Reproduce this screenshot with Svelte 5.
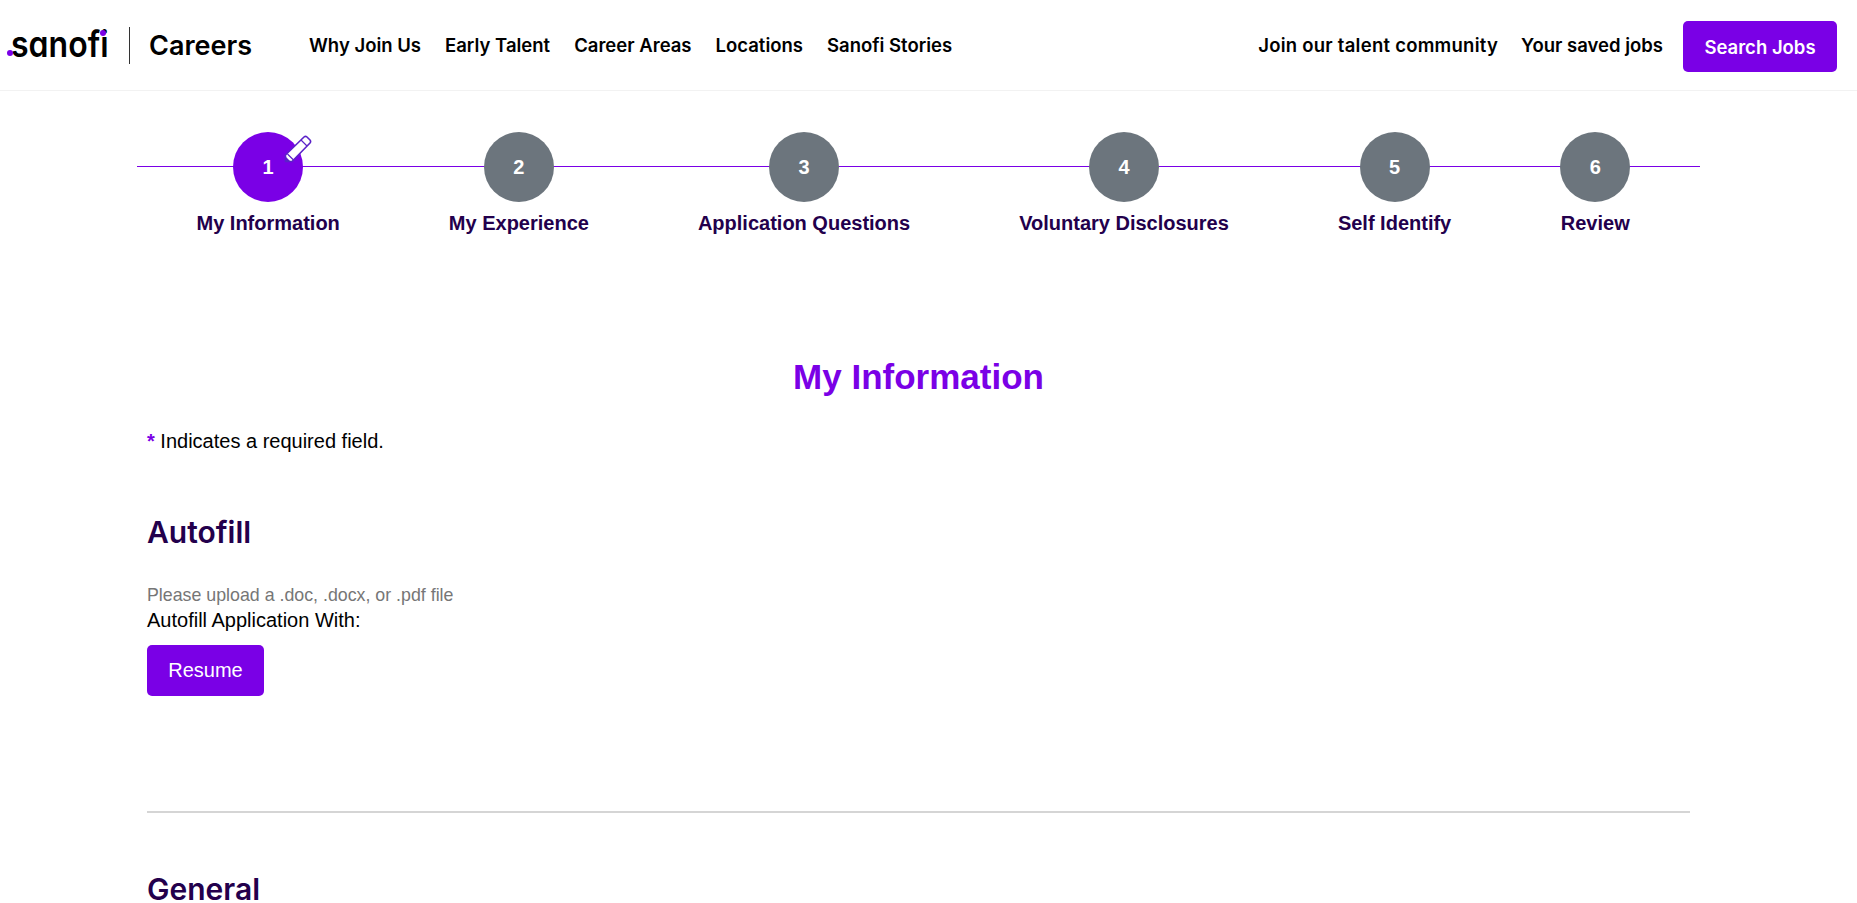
<script>
  const nav = ['Why Join Us', 'Early Talent', 'Career Areas', 'Locations', 'Sanofi Stories'];
  const steps = ['My Information', 'My Experience', 'Application Questions', 'Voluntary Disclosures', 'Self Identify', 'Review'];
</script>

<header class="header">
  <a class="brand" href="#top">
    <span class="logo"><span class="word">sanofi</span><i class="dot dot-s"></i><i class="dot dot-i"></i></span>
    <span class="sep"></span>
    <span class="careers">Careers</span>
  </a>
  <nav class="nav">
    {#each nav as item}<a href="#top">{item}</a>{/each}
  </nav>
  <div class="right">
    <a class="join" href="#top">Join our talent community</a>
    <a href="#top">Your saved jobs</a>
    <a class="search" href="#top">Search Jobs</a>
  </div>
</header>

<ol class="steps">
  {#each steps as label, i}
    <li class="step">
      <span class="circle" class:active={i === 0}>
        {i + 1}
        {#if i === 0}
          <svg class="pencil" viewBox="0 0 28 28" width="28" height="28" aria-hidden="true">
            <path d="M1.5 26.5V20L20 2q1.5-1.2 3 0l3 3q1.2 1.5 0 3L8 26.5Z" fill="#fff" stroke="#5b22c8" stroke-width="1.6" stroke-linejoin="round"/>
            <path d="M17 5l6 6M3.5 19l6 6" fill="none" stroke="#5b22c8" stroke-width="1.2"/>
            <path d="M1.5 26.5V21.5l5 5Z" fill="#5b22c8"/>
          </svg>
        {/if}
      </span>
      <span class="label">{label}</span>
    </li>
  {/each}
</ol>

<main class="main">
  <h1>My Information</h1>
  <p class="req"><span class="star">*</span> Indicates a required field.</p>
  <h2 class="autofill">Autofill</h2>
  <p class="hint">Please upload a .doc, .docx, or .pdf file</p>
  <p class="with">Autofill Application With:</p>
  <button class="resume">Resume</button>
  <hr />
  <h2 class="general">General</h2>
</main>

<style>
  :global(body) {
    margin: 0;
    background: #fff;
    font-family: "Liberation Sans", Arial, sans-serif;
    color: #000;
    overflow: hidden;
  }
  a { color: inherit; text-decoration: none; }

  .header {
    display: flex;
    align-items: center;
    height: 90px;
    box-sizing: content-box;
    border-bottom: 1px solid #f2f2f2;
    padding: 0 20px 0 8px;
    font-family: Inter, sans-serif;
    font-weight: 600;
    font-size: 18.5px;
  }
  .brand { display: flex; align-items: center; }
  .logo {
    position: relative;
    display: block;
    width: 100px;
    height: 40px;
    font-family: Inter, sans-serif;
    font-weight: 600;
    font-size: 36px;
    line-height: 40px;
    font-variant-ligatures: none;
    font-feature-settings: "cv11" 1, "liga" 0;
  }
  .word {
    display: inline-block;
    transform: translate(3px, -1.5px) scaleX(0.89);
    transform-origin: left center;
  }
  .dot {
    position: absolute;
    width: 6px;
    height: 6px;
    border-radius: 50%;
    background: #7a00e6;
  }
  .dot-s { left: -1px; top: 25px; }
  .dot-i { left: 92px; top: 5px; }
  .sep { width: 1px; height: 37px; background: #333; margin: 0 19px 0 21px; }
  .careers { font-size: 27px; font-weight: 600; width: 160px; }
  .nav { display: flex; gap: 24px; }
  .right { display: flex; align-items: center; gap: 23px; margin-left: auto; }
  .join { letter-spacing: 0.25px; }
  .search {
    display: flex;
    align-items: center;
    justify-content: center;
    width: 154px;
    height: 51px;
    margin: 3px 0 0 -3px;
    box-sizing: border-box;
    background: #7a00e6;
    color: #fff;
    border-radius: 5px;
  }

  .steps {
    position: relative;
    list-style: none;
    display: flex;
    gap: 109px;
    margin: 41px 157px 0 137px;
    padding: 0 0 0 59.5px;
  }
  .steps::before {
    content: "";
    position: absolute;
    left: 0;
    right: 0;
    top: 34px;
    height: 1px;
    background: #7a00e6;
  }
  .step {
    position: relative;
    display: flex;
    flex-direction: column;
    align-items: center;
    gap: 10px;
  }
  .circle {
    position: relative;
    display: flex;
    align-items: center;
    justify-content: center;
    width: 70px;
    height: 70px;
    border-radius: 50%;
    background: #6c757d;
    color: #fff;
    font-weight: 700;
    font-size: 20px;
  }
  .circle.active { background: #7a00e6; }
  .pencil { position: absolute; left: 51px; top: 3px; }
  .label { font-weight: 700; font-size: 20px; line-height: 23px; color: #23004c; }

  .main { margin: 0 167px 0 147px; }
  h1 {
    margin: 122px 0 0;
    text-align: center;
    font-size: 35px;
    line-height: 40px;
    color: #7a00e6;
  }
  .req { margin: 32px 0 0; font-size: 20px; line-height: 24px; }
  .star { color: #7a00e6; font-weight: 700; }
  h2 {
    margin: 0;
    font-family: Inter, sans-serif;
    font-weight: 600;
    font-size: 30px;
    line-height: 28px;
    color: #23004c;
  }
  .autofill { margin-top: 65px; }
  .hint { margin: 37px 0 0; color: #767676; font-size: 17.8px; line-height: 24px; }
  .with { margin: 1px 0 0; font-size: 20px; line-height: 24px; }
  .resume {
    display: block;
    margin-top: 13px;
    width: 117px;
    height: 51px;
    border: 0;
    border-radius: 5px;
    background: #7a00e6;
    color: #fff;
    font: 20px "Liberation Sans", Arial, sans-serif;
  }
  hr {
    margin: 115px 0 0;
    border: 0;
    height: 2px;
    background: #d5d5d5;
  }
  .general { margin-top: 62px; }
</style>
